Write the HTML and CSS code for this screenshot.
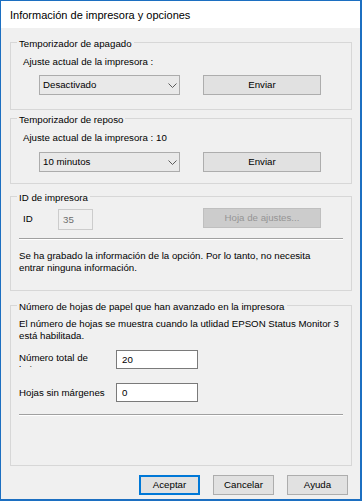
FILE: index.html
```html
<!DOCTYPE html>
<html lang="es">
<head>
    <meta charset="UTF-8">
    <meta name="viewport" content="width=device-width, initial-scale=1.0">
    <title>Información de impresora y opciones</title>
    <link rel="stylesheet" href="styles.css">
</head>
<body>
    <div class="window">
        <div class="titlebar">Información de impresora y opciones</div>

        <fieldset class="group group-power">
            <legend>Temporizador de apagado</legend>
            <p class="setting">Ajuste actual de la impresora :</p>
            <div class="control-row">
                <div class="combo">
                    <span>Desactivado</span>
                    <svg class="chevron" width="9" height="5" viewBox="0 0 9 5"><polyline points="0.5,0.5 4.5,4.5 8.5,0.5"/></svg>
                </div>
                <button class="btn btn-send">Enviar</button>
            </div>
        </fieldset>

        <fieldset class="group group-sleep">
            <legend>Temporizador de reposo</legend>
            <p class="setting">Ajuste actual de la impresora : 10</p>
            <div class="control-row">
                <div class="combo">
                    <span>10 minutos</span>
                    <svg class="chevron" width="9" height="5" viewBox="0 0 9 5"><polyline points="0.5,0.5 4.5,4.5 8.5,0.5"/></svg>
                </div>
                <button class="btn btn-send">Enviar</button>
            </div>
        </fieldset>

        <fieldset class="group group-id">
            <legend>ID de impresora</legend>
            <div class="id-row">
                <span class="id-label">ID</span>
                <div class="field field-disabled">35</div>
                <button class="btn btn-send" disabled>Hoja de ajustes...</button>
            </div>
            <hr class="separator">
            <p class="note">Se ha grabado la información de la opción. Por lo tanto, no necesita<br>entrar ninguna información.</p>
        </fieldset>

        <fieldset class="group group-count">
            <legend>Número de hojas de papel que han avanzado en la impresora</legend>
            <p class="note">El número de hojas se muestra cuando la utlidad EPSON Status Monitor 3<br>está habilitada.</p>
            <div class="field-row first">
                <span class="field-label clipped">Número total de hojas</span>
                <div class="field">20</div>
            </div>
            <div class="field-row second">
                <span class="field-label">Hojas sin márgenes</span>
                <div class="field">0</div>
            </div>
            <hr class="separator">
        </fieldset>

        <div class="footer">
            <button class="btn btn-default">Aceptar</button>
            <button class="btn">Cancelar</button>
            <button class="btn">Ayuda</button>
        </div>
    </div>
</body>
</html>
```

FILE: styles.css
```css
* {
    margin: 0;
    padding: 0;
    box-sizing: border-box;
}

body {
    font-family: "Liberation Sans", Arial, sans-serif;
    font-size: 9.7px;
    line-height: 12px;
    color: #000;
    background: #fff;
}

.window {
    width: 362px;
    height: 501px;
    background: #f0f0f0;
    border: 1px solid #1c6fc1;
    border-right-width: 2px;
    border-bottom-width: 2px;
    display: flex;
    flex-direction: column;
}

.titlebar {
    height: 27px;
    background: #fff;
    padding: 2px 0 0 9px;
    font-size: 11px;
    line-height: 25px;
}

/* group boxes */
.group {
    border: 1px solid #d7d7d7;
    margin: 0 8px 0 9px;
    padding: 0 8px;
    min-width: 0;
}

.group legend {
    padding: 2px 2px 0;
    margin-left: -2px;
    line-height: 13px;
}

.group-power {
    margin-top: 7px;
    padding-bottom: 14px;
}

.group-sleep {
    margin-top: 1px;
    padding-bottom: 11px;
}

.group-id {
    margin-top: 5px;
    padding-bottom: 16px;
}

.group-count {
    margin-top: 7px;
    padding-bottom: 49px;
}

.setting {
    margin: 6px 0 0 4px;
}

.control-row {
    display: flex;
    margin-top: 7px;
    padding-left: 20px;
}

.group-sleep .control-row {
    margin-top: 8px;
}

.combo {
    width: 141px;
    height: 20px;
    background: #e9e9e9;
    border: 1px solid #acacac;
    display: flex;
    align-items: center;
    padding-left: 3px;
    line-height: 18px;
}

.chevron {
    margin-left: auto;
    margin-right: 2px;
    fill: none;
    stroke: #5a5a5a;
    stroke-width: 1;
}

/* buttons */
.btn {
    font: inherit;
    color: #000;
    height: 20px;
    background: #e1e1e1;
    border: 1px solid #adadad;
    line-height: 18px;
}

.btn-send {
    width: 118px;
    margin-left: auto;
    margin-right: 22px;
}

.btn:disabled {
    background: #cccccc;
    border-color: #bfbfbf;
    color: #959595;
}

.btn-default {
    border-color: #0078d7;
    box-shadow: inset 0 0 0 1px #0078d7;
}

/* printer id */
.id-row {
    display: flex;
    align-items: flex-start;
    margin-top: 4px;
}

.id-label {
    width: 35px;
    margin: 5px 0 0 4px;
}

.field {
    width: 82px;
    height: 19px;
    background: #fff;
    border: 1px solid #7a7a7a;
    padding-left: 5px;
    line-height: 17px;
}

.field-disabled {
    width: 35px;
    height: 21px;
    margin-top: 1px;
    background: #f0f0f0;
    border-color: #cccccc;
    color: #6d6d6d;
    padding-left: 4px;
    line-height: 19px;
}

.separator {
    border: 0;
    border-top: 1px solid #a0a0a0;
    border-bottom: 1px solid #fff;
    margin-top: 8px;
}

.group-id .note {
    margin-top: 10px;
}

.group-count .note {
    margin-top: 5px;
}

/* sheet counters */
.field-row {
    display: flex;
    align-items: flex-start;
}

.field-row.first {
    margin-top: 8px;
}

.field-row.second {
    margin-top: 14px;
}

.field-label {
    width: 93px;
    margin-right: 4px;
    margin-top: 4px;
}

/* the dialog clips this label to one line, as in the original */
.field-label.clipped {
    height: 15px;
    margin-top: 2px;
    overflow: hidden;
}

.group-count .separator {
    margin-top: 12px;
}

/* dialog buttons */
.footer {
    display: flex;
    justify-content: flex-end;
    gap: 13px;
    margin-top: 9px;
    padding-right: 12px;
}

.footer .btn {
    width: 61px;
}
```
